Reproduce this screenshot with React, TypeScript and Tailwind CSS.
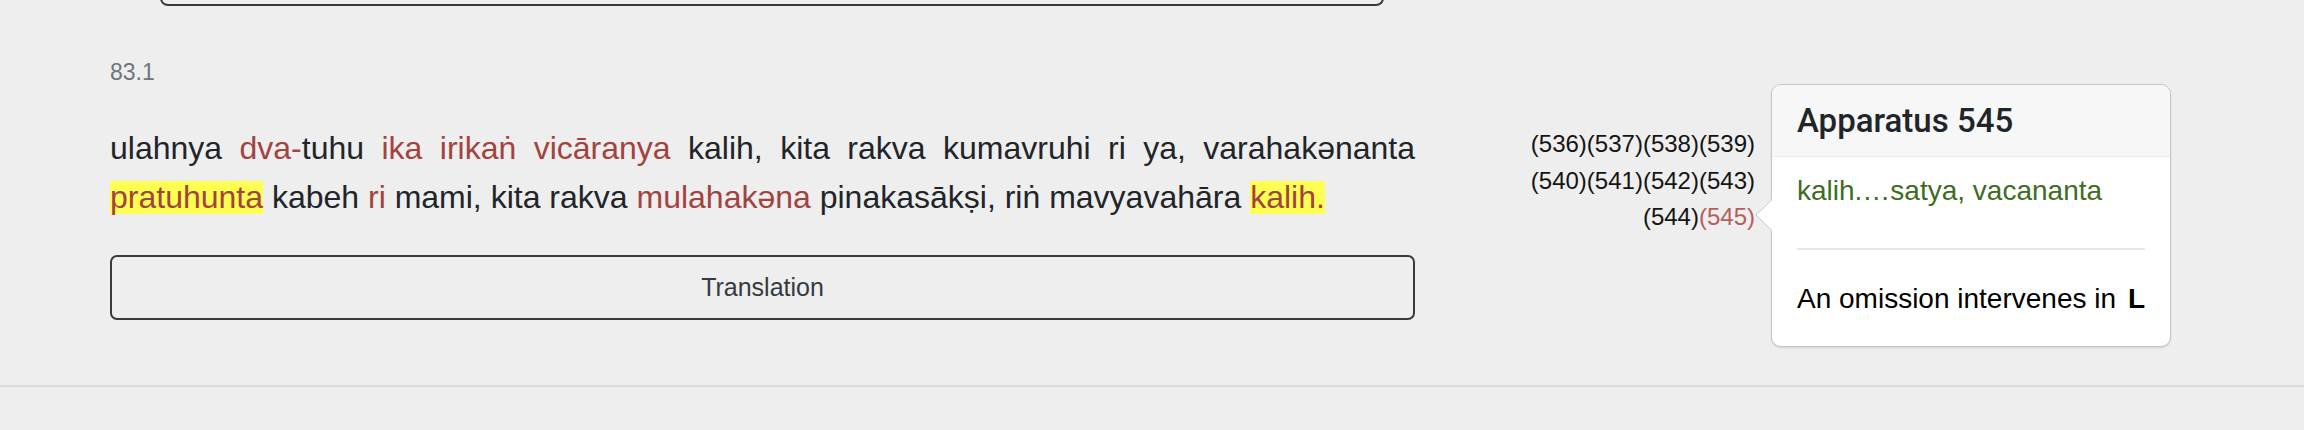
const verse: { text: string; tone?: 'var' | 'mark' }[] = [
  { text: 'ulahnya ' },
  { text: 'dva-', tone: 'var' },
  { text: 'tuhu ' },
  { text: 'ika', tone: 'var' },
  { text: ' ' },
  { text: 'irikaṅ', tone: 'var' },
  { text: ' ' },
  { text: 'vicāranya', tone: 'var' },
  { text: ' kalih, kita rakva kumavruhi ri ya, varahakənanta ' },
  { text: 'pratuhunta', tone: 'mark' },
  { text: ' kabeh ' },
  { text: 'ri', tone: 'var' },
  { text: ' mami, kita rakva ' },
  { text: 'mulahakəna', tone: 'var' },
  { text: ' pinakasākṣi, riṅ mavyavahāra ' },
  { text: 'kalih.', tone: 'mark' },
];

const refs = [536, 537, 538, 539, 540, 541, 542, 543, 544, 545];

function ApparatusPopover() {
  return (
    <div className="absolute left-[calc(100%+16px)] top-[-40px] w-[400px] rounded-[10px] border border-[#c6c6c6] bg-white shadow-[0_1px_2px_rgba(0,0,0,0.12)]">
      <svg className="absolute left-[-17px] top-[114px]" width="17" height="32" viewBox="0 0 17 32">
        <polygon points="17,0 1,16 17,32" fill="#ffffff" />
        <polyline points="17,0.5 1,16 17,31.5" fill="none" stroke="#c6c6c6" strokeWidth="1" />
      </svg>
      <div className="rounded-t-[9px] border-b border-[#ebebeb] bg-[#f7f7f7] px-[25px] py-[17px] font-['Roboto',sans-serif] text-[33px] font-medium leading-[37px] text-[#212529]">
        Apparatus 545
      </div>
      <div className="px-[25px] pb-[27px] pt-[14px] text-[28px] leading-[40px]">
        <div className="text-[#3f6d1f]">kalih.…satya, vacananta</div>
        <div className="mt-[37px] border-t-2 border-[#e6e6e6]" />
        <div className="mt-[29px] flex justify-between text-black">
          <span>An omission intervenes in</span>
          <span className="font-bold">L</span>
        </div>
      </div>
    </div>
  );
}

export default function App() {
  return (
    <div className="flex min-h-[430px] flex-col bg-[#eeeeee] font-['Liberation_Sans',Arial,sans-serif] text-[#212529]">
      {/* bottom of the previous verse's translation box */}
      <div className="ml-[160px] mt-[-34px] h-[40px] w-[1224px] rounded-b-[8px] border-2 border-t-0 border-[#343a40]" />

      <section className="border-b-2 border-[#dadada] pb-[65px] pl-[110px] pt-[49px]">
        <div className="text-[23px] leading-[34px] text-[#6c757d]">83.1</div>

        <div className="mt-[35px] flex items-start">
          <div className="w-[1305px]">
            <p className="text-justify text-[32px] leading-[49px]">
              {verse.map((w, i) =>
                w.tone === 'var' ? (
                  <span key={i} className="text-[#a2433f]">{w.text}</span>
                ) : w.tone === 'mark' ? (
                  <span key={i} className="inline-block bg-[#ffff52] leading-[33px] text-[#a2433f]">{w.text}</span>
                ) : (
                  <span key={i}>{w.text}</span>
                )
              )}
            </p>
            <button className="mt-[33px] h-[65px] w-full rounded-[7px] border-2 border-[#343a40] text-[25px] text-[#343a40]">
              Translation
            </button>
          </div>

          <div className="relative flex w-[340px] justify-end">
            <div className="w-[226px] pt-[2px] text-right text-[24px] leading-[36.5px] text-[#141414]">
              {refs.map((n) => (
                <span key={n} className={n === 545 ? 'inline-block text-[#b55e5e]' : 'inline-block'}>
                  ({n})
                </span>
              ))}
            </div>
            <ApparatusPopover />
          </div>
        </div>
      </section>
    </div>
  );
}
